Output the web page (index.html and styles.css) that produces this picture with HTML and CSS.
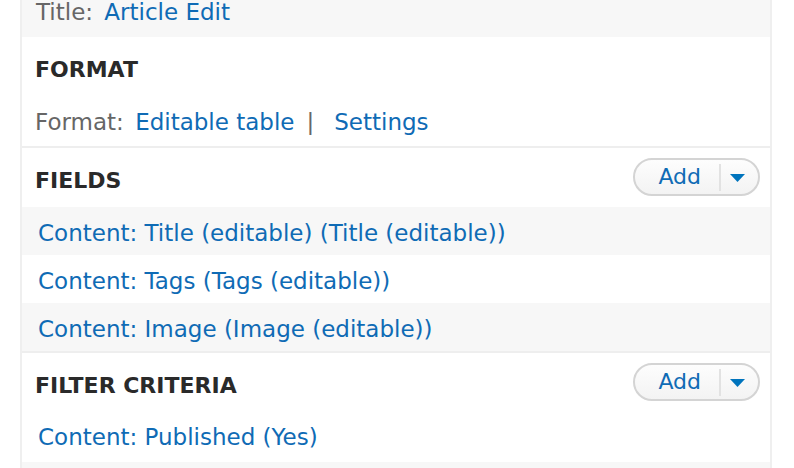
FILE: index.html
```html
<!DOCTYPE html>
<html>
<head>
<meta charset="utf-8">
<link rel="stylesheet" href="styles.css">
</head>
<body>
<div class="panel">
  <div class="title-row"><span class="label">Title:</span> <a class="link" href="#">Article Edit</a></div>

  <section class="section section-format">
    <div class="section-head">
      <h2 class="section-title">FORMAT</h2>
    </div>
    <div class="format-line"><span class="label">Format:</span> <a class="link" href="#">Editable table</a><span class="pipe">|</span><a class="link" href="#">Settings</a></div>
  </section>

  <section class="section section-fields">
    <div class="section-head">
      <h2 class="section-title">FIELDS</h2>
      <div class="dropbutton">
        <a class="dropbutton-action" href="#">Add</a>
        <span class="dropbutton-divider"></span>
        <span class="dropbutton-toggle"><svg width="15" height="8" viewBox="0 0 15 8"><path d="M0 0 L15 0 L7.5 8 Z" fill="#0074bd"/></svg></span>
      </div>
    </div>
    <ul class="rows">
      <li class="row odd"><a class="link" href="#">Content: Title (editable) (Title (editable))</a></li>
      <li class="row even"><a class="link" href="#">Content: Tags (Tags (editable))</a></li>
      <li class="row odd"><a class="link" href="#">Content: Image (Image (editable))</a></li>
    </ul>
  </section>

  <section class="section section-filter">
    <div class="section-head">
      <h2 class="section-title">FILTER CRITERIA</h2>
      <div class="dropbutton">
        <a class="dropbutton-action" href="#">Add</a>
        <span class="dropbutton-divider"></span>
        <span class="dropbutton-toggle"><svg width="15" height="8" viewBox="0 0 15 8"><path d="M0 0 L15 0 L7.5 8 Z" fill="#0074bd"/></svg></span>
      </div>
    </div>
    <ul class="rows">
      <li class="row plain"><a class="link" href="#">Content: Published (Yes)</a></li>
    </ul>
  </section>
  <div class="next-bar"></div>
</div>
</body>
</html>
```

FILE: styles.css
```css
html, body {
  margin: 0;
  padding: 0;
  background: #ffffff;
}
body {
  font-family: "DejaVu Sans", Verdana, sans-serif;
  font-size: 23px;
  color: #666;
  height: 468px;
  overflow: hidden;
}
.panel {
  margin-left: 20px;
  width: 752px;
  box-sizing: border-box;
  border-left: 2px solid #efefef;
  border-right: 2px solid #efefef;
}
.link {
  color: #0f6bb5;
  text-decoration: none;
}
.label {
  color: #666;
  margin-right: 4px;
}
.title-row {
  height: 37px;
  background: #f7f7f7;
  padding-left: 14px;
  line-height: 24px;
  white-space: nowrap;
}
.section {
  border-bottom: 2px solid #eeeeee;
}
.section-head {
  display: flex;
  justify-content: space-between;
  align-items: flex-start;
  padding: 10px 10px 0 13px;
  box-sizing: border-box;
}
.section-filter .section-head {
  height: 58px;
}
.section-fields .section-head {
  height: 59px;
}
.section-title {
  margin: 7px 0 0 0;
  font-size: 22px;
  line-height: 32px;
  font-weight: bold;
  color: #2a2a2a;
}
.format-line {
  padding: 20px 0 8px 13px;
  line-height: 32px;
  white-space: nowrap;
}
.pipe {
  color: #666;
  margin: 0 20px 0 12px;
}
.dropbutton {
  display: flex;
  align-items: center;
  height: 38px;
  box-sizing: border-box;
  border: 2px solid #d4d4d4;
  border-radius: 20px;
  background: linear-gradient(#fdfdfd, #f3f3f3);
}
.dropbutton-action {
  color: #0f6bb5;
  text-decoration: none;
  font-size: 22px;
  line-height: 34px;
  padding: 0 18px 0 23px;
}
.dropbutton-divider {
  width: 2px;
  height: 27px;
  background: #e2e2e2;
}
.dropbutton-toggle {
  display: flex;
  align-items: center;
  padding: 1px 13px 0 9px;
}
.rows {
  list-style: none;
  margin: 0;
  padding: 0;
}
.row {
  height: 48px;
  box-sizing: border-box;
  padding: 4px 0 0 16px;
  line-height: 44px;
  white-space: nowrap;
}
.row.odd {
  background: #f7f7f7;
}
.section-filter {
  border-bottom: none;
  padding-bottom: 3px;
}
.next-bar {
  height: 12px;
  background: #f7f7f7;
}
```
